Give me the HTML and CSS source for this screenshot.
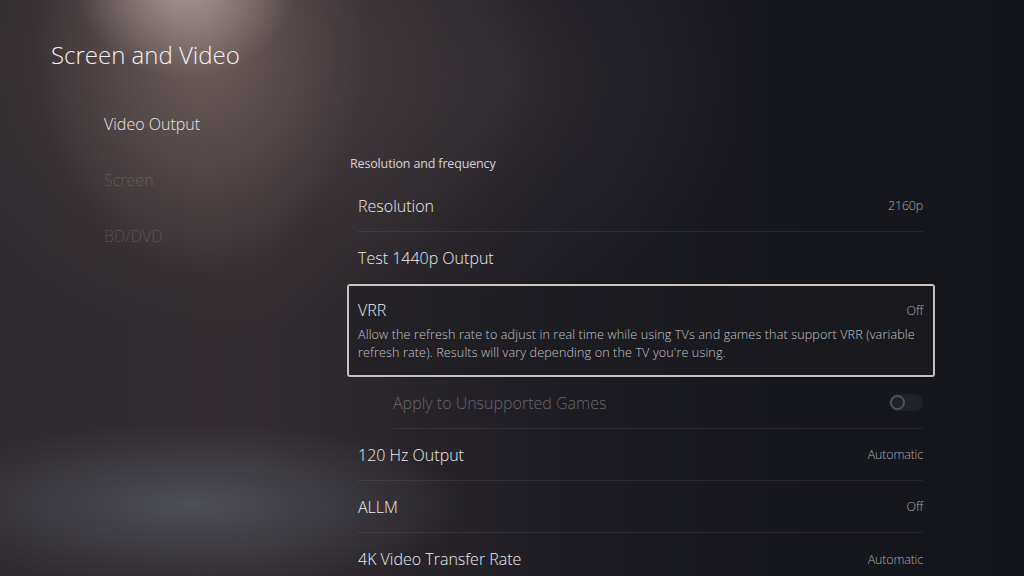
FILE: index.html
```html
<!DOCTYPE html>
<html lang="en">
<head>
<meta charset="utf-8">
<title>Screen and Video</title>
<link rel="stylesheet" href="styles.css">
</head>
<body>
<div class="page">
  <header class="header">
    <h1 class="title">Screen and Video</h1>
  </header>
  <div class="main">
    <nav class="nav">
      <div class="nav-item active">Video Output</div>
      <div class="nav-item">Screen</div>
      <div class="nav-item">BD/DVD</div>
    </nav>
    <section class="content">
      <div class="section-label">Resolution and frequency</div>
      <div class="list">
        <div class="row sep">
          <span class="label">Resolution</span>
          <span class="value">2160p</span>
        </div>
        <div class="row">
          <span class="label">Test 1440p Output</span>
        </div>
        <div class="focus">
          <div class="focus-head">
            <span class="label">VRR</span>
            <span class="value">Off</span>
          </div>
          <p class="desc">Allow the refresh rate to adjust in real time while using TVs and games that support VRR (variable refresh rate). Results will vary depending on the TV you're using.</p>
        </div>
        <div class="row sub sep">
          <span class="label dim">Apply to Unsupported Games</span>
          <span class="toggle"><span class="knob"></span></span>
        </div>
        <div class="row sep">
          <span class="label">120 Hz Output</span>
          <span class="value">Automatic</span>
        </div>
        <div class="row sep">
          <span class="label">ALLM</span>
          <span class="value">Off</span>
        </div>
        <div class="row">
          <span class="label">4K Video Transfer Rate</span>
          <span class="value">Automatic</span>
        </div>
      </div>
    </section>
  </div>
</div>
</body>
</html>
```
FILE: styles.css
```css
html, body {
  margin: 0;
  padding: 0;
}
body {
  width: 1024px;
  height: 576px;
  overflow: hidden;
  font-family: "Open Sans", "Noto Sans", sans-serif;
  font-weight: 300;
  color: #ececec;
  background:
    radial-gradient(ellipse 150px 130px at 185px -20px, rgba(205,185,180,0.7), rgba(205,185,180,0) 75%),
    radial-gradient(ellipse 230px 330px at 200px 40px, rgba(150,128,122,0.45), rgba(150,128,122,0) 72%),
    radial-gradient(ellipse 440px 380px at 220px 60px, rgba(120,100,96,0.35), rgba(120,100,96,0) 72%),
    radial-gradient(ellipse 360px 300px at 500px 80px, rgba(100,88,90,0.22), rgba(100,88,90,0) 72%),
    radial-gradient(ellipse 380px 110px at 190px 505px, rgba(100,106,118,0.55), rgba(100,106,118,0) 75%),
    linear-gradient(90deg, #2e2a2e 0%, #322c30 25%, #2a262b 38%, #1d1c23 55%, #17171e 75%, #15151c 100%);
}
.page {
  display: flex;
  flex-direction: column;
}
.header {
  padding: 39px 0 0 51px;
}
.title {
  margin: 0;
  font-size: 24px;
  line-height: 32px;
  font-weight: 300;
  color: #f2f2f2;
  letter-spacing: 0;
}
.main {
  display: flex;
}
.nav {
  width: 243px;
  padding: 25px 0 0 104px;
  display: flex;
  flex-direction: column;
}
.nav-item {
  height: 56px;
  line-height: 56px;
  font-size: 16px;
  color: rgba(255,255,255,0.17);
}
.nav-item.active {
  color: #e8e8e8;
}
.content {
  width: 588px;
  padding-top: 81px;
}
.section-label {
  padding-left: 3px;
  font-size: 12.5px;
  line-height: 24px;
  color: #d6d6d6;
  margin-bottom: 4px;
  font-weight: 400;
  letter-spacing: -0.15px;
}
.list {
  display: flex;
  flex-direction: column;
}
.row {
  height: 52px;
  margin: 0 12px 0 11px;
  display: flex;
  align-items: center;
  justify-content: space-between;
  box-sizing: border-box;
}
.row.sep {
  border-bottom: 1px solid rgba(255,255,255,0.07);
}
.row.sub {
  margin-left: 46px;
}
.label {
  font-size: 16px;
  color: #ececec;
  letter-spacing: 0;
}
.label.dim {
  color: #66656b;
}
.value {
  font-size: 12.5px;
  color: #a9a9ad;
  letter-spacing: -0.2px;
}
.focus {
  height: 93px;
  box-sizing: border-box;
  border: 2px solid #c4c2c4;
  border-top-color: #cfc6c1;
  border-radius: 3px;
  background: rgba(28,27,32,0.5);
  padding: 14px 8px 13px 9px;
  box-shadow: 0 0 2px rgba(0,0,0,0.4);
}
.focus-head {
  height: 20px;
  display: flex;
  align-items: center;
  justify-content: space-between;
  padding-right: 2px;
}
.desc {
  margin: 6px 0 0;
  font-size: 12.6px;
  line-height: 18px;
  color: #c4c4c8;
  letter-spacing: 0.12px;
}
.toggle {
  width: 34px;
  height: 17px;
  border-radius: 9px;
  background: rgba(255,255,255,0.05);
  display: flex;
  align-items: center;
  padding-left: 1px;
  box-sizing: border-box;
}
.knob {
  width: 11px;
  height: 11px;
  border-radius: 50%;
  border: 2px solid #4f4f57;
}
```
